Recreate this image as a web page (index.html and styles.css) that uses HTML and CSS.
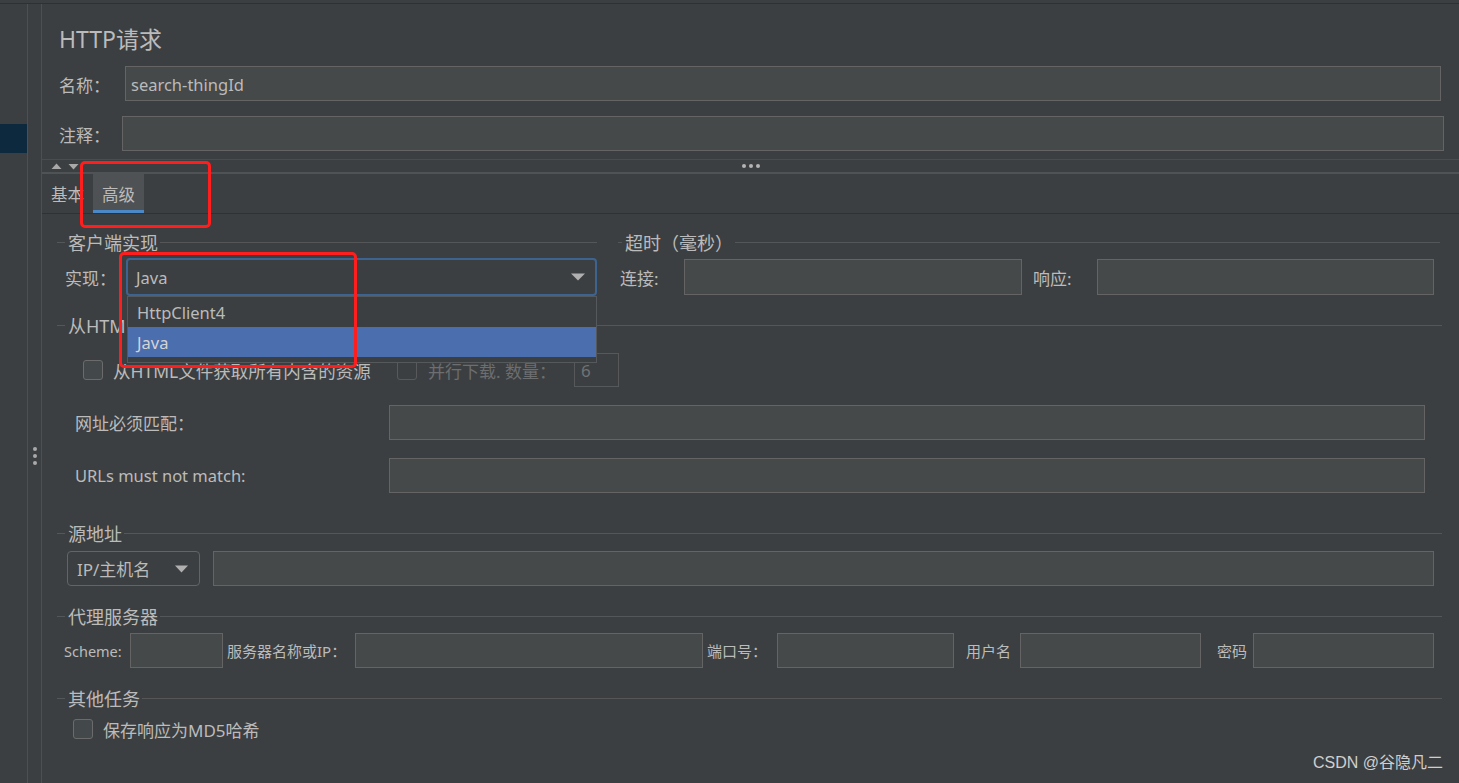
FILE: index.html
```html
<!DOCTYPE html>
<html lang="zh">
<head>
<meta charset="utf-8">
<title>HTTP请求</title>
<link rel="stylesheet" href="styles.css">
</head>
<body>
<div class="app">
  <div class="topline"></div>
  <div class="cols">
    <aside class="tree"><div class="tree-sel"></div></aside>
    <div class="vsplit"><span class="vdot"></span><span class="vdot"></span><span class="vdot"></span></div>
    <main class="main">
      <h1 class="title">HTTP请求</h1>
      <div class="field-row name-row"><span class="flabel">名称：</span><div class="input text">search-thingId</div></div>
      <div class="field-row comment-row"><span class="flabel">注释：</span><div class="input"></div></div>
      <div class="hsplit">
        <div class="hsplit-bar">
          <div class="arrows">
            <svg width="11" height="7" viewBox="0 0 11 7"><polygon points="0.5,6 5.5,0.5 10.5,6" fill="#a8a8a8"/></svg>
            <svg width="11" height="7" viewBox="0 0 11 7"><polygon points="0.5,1 10.5,1 5.5,6.5" fill="#a8a8a8"/></svg>
          </div>
          <div class="hdots"><span class="hdot"></span><span class="hdot"></span><span class="hdot"></span></div>
        </div>
      </div>
      <div class="tabs"><div class="tab">基本</div><div class="tab active">高级</div></div>

      <div class="content">
        <div class="pair">
          <section class="group g-client">
            <div class="gtitle">客户端实现</div>
            <div class="row client-row">
              <span class="lbl w62">实现：</span>
              <div class="combo focused">
                <span>Java</span>
                <svg class="caret" width="14" height="8" viewBox="0 0 14 8"><polygon points="0,0.5 14,0.5 7,7.5" fill="#b0b0b0"/></svg>
              </div>
            </div>
          </section>
          <section class="group g-timeout">
            <div class="gtitle short">超时（毫秒）</div>
            <div class="row timeout-row">
              <span class="lbl w64">连接:</span>
              <div class="input w338"></div>
              <span class="lbl w64 ml11">响应:</span>
              <div class="input w337"></div>
            </div>
          </section>
        </div>

        <section class="group g-html">
          <div class="gtitle">从HTML文件嵌入资源</div>
          <div class="row check-row">
            <span class="checkbox"></span>
            <span class="ctext c1">从HTML文件获取所有内含的资源</span>
            <span class="checkbox disabled"></span>
            <span class="ctext dis">并行下载. 数量：</span>
            <div class="input disabled num">6</div>
          </div>
          <div class="row url-row">
            <span class="lbl w314">网址必须匹配：</span>
            <div class="input w1036"></div>
          </div>
          <div class="row url-row">
            <span class="lbl w314 latin">URLs must not match:</span>
            <div class="input w1036"></div>
          </div>
        </section>

        <section class="group g-src">
          <div class="gtitle">源地址</div>
          <div class="row src-row">
            <div class="combo small">
              <span>IP/主机名</span>
              <svg class="caret" width="13" height="8" viewBox="0 0 13 8"><polygon points="0,0.5 13,0.5 6.5,7.5" fill="#b0b0b0"/></svg>
            </div>
            <div class="input grow ml13"></div>
          </div>
        </section>

        <section class="group g-proxy">
          <div class="gtitle">代理服务器</div>
          <div class="row proxy-row">
            <span class="plbl p66 latin">Scheme:</span>
            <div class="input p93"></div>
            <span class="plbl p128">服务器名称或IP：</span>
            <div class="input p348"></div>
            <span class="plbl p74">端口号：</span>
            <div class="input p177"></div>
            <span class="plbl p66 pl12">用户名</span>
            <div class="input p181"></div>
            <span class="plbl p52 pl16">密码</span>
            <div class="input p181"></div>
          </div>
        </section>

        <section class="group g-other">
          <div class="gtitle">其他任务</div>
          <div class="row md5-row">
            <span class="checkbox"></span>
            <span class="ctext ml11">保存响应为MD5哈希</span>
          </div>
        </section>
      </div>
    </main>
  </div>

  <div class="popup">
    <div class="opt">HttpClient4</div>
    <div class="opt sel">Java</div>
  </div>
  <div class="mark mark1"></div>
  <div class="mark mark2"></div>
  <div class="watermark">CSDN @谷隐凡二</div>
</div>
</body>
</html>
```
FILE: styles.css
```css
* { box-sizing: border-box; }
html, body { margin: 0; padding: 0; }
body {
  width: 1459px;
  height: 783px;
  overflow: hidden;
  background: #3c3f41;
  color: #bbbbbb;
  font-family: "Noto Sans", "Noto Sans CJK SC", sans-serif;
  font-size: 17px;
}
.app { position: relative; width: 1459px; height: 783px; }
.topline { height: 4px; border-bottom: 1px solid #2e3032; }
.cols { display: flex; height: 779px; }

.tree { width: 28px; border-right: 1px solid #4d5052; padding-top: 120px; }
.tree-sel { height: 29px; background: #0d293e; }

.vsplit {
  width: 14px;
  border-right: 1px solid #4d5052;
  display: flex;
  flex-direction: column;
  align-items: center;
  padding-top: 443px;
  gap: 3px;
}
.vdot { width: 4px; height: 4px; border-radius: 50%; background: #a9a9a9; }

.main { flex: 1; display: flex; flex-direction: column; }
.title {
  margin: 0;
  padding: 21px 0 0 17px;
  font-size: 23px;
  line-height: 28px;
  font-weight: normal;
  color: #bbbbbb;
}

.field-row { display: flex; align-items: stretch; height: 35px; padding-left: 17px; }
.name-row { margin-top: 13px; padding-right: 18px; }
.comment-row { margin-top: 15px; padding-right: 15px; }
.name-row .flabel { width: 66px; }
.comment-row .flabel { width: 63px; }
.flabel { display: flex; align-items: center; font-size: 17px; padding-top: 2px; }
.field-row .input { flex: 1; }

.input {
  background: #45494a;
  border: 1px solid #646464;
  height: 35px;
  display: flex;
  align-items: center;
  color: #bbbbbb;
}
.input.text { padding: 2px 0 0 5px; font-size: 16.5px; }

.hsplit { padding-top: 8px; }
.hsplit-bar {
  position: relative;
  height: 15px;
  border-top: 1px solid #4a4d4f;
  border-bottom: 2px solid #505355;
  display: flex;
  align-items: center;
  justify-content: center;
}
.arrows { position: absolute; left: 9px; top: 3px; display: flex; gap: 6px; }
.arrows svg { display: block; }
.hdots { display: flex; gap: 3px; }
.hdot { width: 4px; height: 4px; border-radius: 50%; background: #b4b4b4; }

.tabs { display: flex; height: 40px; border-bottom: 1px solid #2f3133; }
.tab { padding: 0 9px; display: flex; align-items: center; font-size: 16.5px; height: 39px; }
.tab.active { background: #4e5254; border-bottom: 3px solid #4a88c7; padding-top: 3px; }

.content { padding: 0 17px 0 15px; display: flex; flex-direction: column; }
.pair { display: flex; gap: 21px; margin-top: 18px; }
.g-client { width: 540px; }
.g-timeout { flex: 1; margin-right: 2px; }

.gtitle {
  display: flex;
  align-items: center;
  height: 20px;
  font-size: 18px;
  white-space: nowrap;
}
.gtitle::before { content: ""; width: 8px; height: 1px; background: #545658; margin-right: 3px; }
.gtitle.short::before { width: 4px; }
.gtitle::after { content: ""; flex: 1; height: 1px; background: #545658; margin-left: 2px; }

.row { display: flex; align-items: center; }
.lbl { font-size: 17px; white-space: nowrap; }
.lbl.latin { font-size: 16.5px; }
.w62 { width: 62px; }
.w64 { width: 64px; }
.w314 { width: 314px; }
.ml11 { margin-left: 11px; }
.ml13 { margin-left: 13px; }
.w338 { width: 338px; height: 36px; }
.w337 { width: 337px; height: 36px; }
.w1036 { width: 1036px; }
.grow { flex: 1; }

.client-row { margin-top: 6px; padding-left: 8px; height: 38px; }
.timeout-row { margin-top: 6px; padding-left: 2px; height: 38px; }

.combo {
  display: flex;
  align-items: center;
  justify-content: space-between;
  background: #3c3f41;
  border: 1px solid #646464;
  border-radius: 4px;
  font-size: 17px;
}
.combo.focused {
  width: 471px;
  height: 38px;
  border: 2px solid #3d6490;
  border-radius: 4px;
  padding: 0 10px 0 8px;
  flex-shrink: 0;
  font-size: 16.5px;
}
.combo.small { width: 133px; height: 35px; padding: 0 11px 0 9px; }
.caret { display: block; }

.g-html { margin-top: 19px; }
.check-row { margin-top: 18px; height: 34px; padding-left: 26px; }
.checkbox {
  width: 20px;
  height: 20px;
  border: 1px solid #6b6b6b;
  background: #43494a;
  border-radius: 3px;
  flex-shrink: 0;
}
.checkbox.disabled { background: transparent; border-color: #58595a; margin-left: 20px; }
.ctext { margin-left: 10px; font-size: 17px; white-space: nowrap; }
.ctext.c1 { width: 264px; font-size: 17.5px; flex-shrink: 0; }
.ctext.dis { color: #6c6e70; margin-left: 11px; width: 146px; font-size: 17px; flex-shrink: 0; }
.input.disabled {
  background: transparent;
  border-color: #565859;
  color: #707274;
}
.num { width: 45px; height: 34px; padding-left: 6px; font-size: 17px; }
.url-row { margin-top: 18px; height: 35px; padding-left: 18px; }

.g-src { margin-top: 30px; }
.src-row { margin-top: 8px; height: 35px; padding-left: 10px; padding-right: 8px; }

.g-proxy { margin-top: 20px; }
.proxy-row { margin-top: 7px; height: 35px; padding-left: 7px; }
.plbl { font-size: 15px; white-space: nowrap; flex-shrink: 0; }
.plbl.latin { font-size: 14.5px; }
.proxy-row .input { flex-shrink: 0; }
.p66 { width: 66px; }
.p128 { width: 132px; padding-left: 4px; }
.p74 { width: 74px; padding-left: 4px; }
.p52 { width: 52px; }
.pl12 { padding-left: 12px; }
.pl16 { padding-left: 16px; }
.p93 { width: 93px; }
.p348 { width: 348px; }
.p177 { width: 177px; }
.p181 { width: 181px; }

.g-other { margin-top: 20px; }
.md5-row { margin-top: 6px; height: 30px; padding-left: 16px; }

.popup {
  position: absolute;
  left: 127px;
  top: 296px;
  width: 470px;
  height: 67px;
  background: #3c3f41;
  border: 1px solid #56595b;
}
.opt {
  height: 30px;
  display: flex;
  align-items: center;
  padding: 1px 0 0 9px;
  font-size: 16.5px;
  color: #bbbbbb;
}
.opt.sel { background: #4b6eaf; color: #d4d4d4; }

.mark {
  position: absolute;
  border: 3px solid #ff1e1e;
  border-radius: 5px;
}
.mark1 { left: 80px; top: 161px; width: 131px; height: 67px; }
.mark2 { left: 119px; top: 252px; width: 238px; height: 116px; }

.watermark {
  position: absolute;
  right: 16px;
  top: 752px;
  font-family: "Liberation Sans", "Noto Sans CJK SC", sans-serif;
  font-size: 16px;
  line-height: 22px;
  color: #cfcfcf;
}
```
